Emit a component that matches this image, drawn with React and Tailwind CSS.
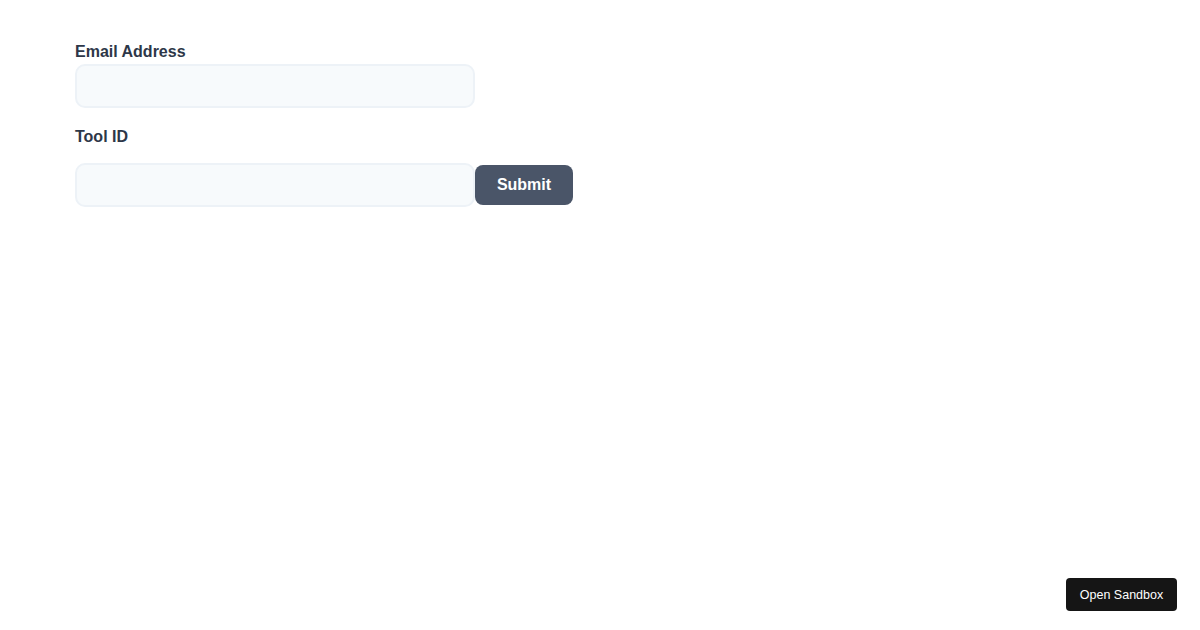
import React from 'react';

const App = () => {
  return (
    <div className="min-h-screen bg-white font-['Liberation_Sans',Arial,sans-serif]">
      <form className="pl-[75px] pt-[40px] w-[600px]" onSubmit={(e) => e.preventDefault()}>
        {/* Email */}
        <label className="block text-base leading-6 font-bold text-[#2d3748]">Email Address</label>
        <input
          type="email"
          className="block w-[400px] h-[44px] px-3 bg-[#f7fafc] border-2 border-[#edf2f7] rounded-[10px] outline-none"
        />

        {/* Tool ID */}
        <label className="block mt-[17px] text-base leading-6 font-bold text-[#2d3748]">Tool ID</label>
        <div className="flex items-center mt-[14px]">
          <input
            type="text"
            className="block w-[400px] h-[44px] px-3 bg-[#f7fafc] border-2 border-[#edf2f7] rounded-[10px] outline-none"
          />
          <button
            type="submit"
            className="w-[98px] h-[40px] bg-[#4a5568] text-white text-base font-bold rounded-lg"
          >
            Submit
          </button>
        </div>
      </form>

      {/* floating sandbox button */}
      <button className="fixed right-[23px] bottom-[19px] w-[111px] h-[33px] pt-px bg-[#151515] text-white text-[12.5px] rounded">
        Open Sandbox
      </button>
    </div>
  );
};

export default App;
